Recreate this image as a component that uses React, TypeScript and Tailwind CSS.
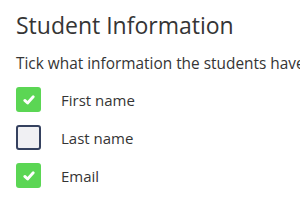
import React from "react";

const fields = [
  { label: "First name", checked: true },
  { label: "Last name", checked: false },
  { label: "Email", checked: true },
];

function Check({ checked }: { checked: boolean }) {
  if (checked) {
    return (
      <div className="flex h-[25px] w-[25px] shrink-0 items-center justify-center rounded-[3px] bg-[#5bd654]">
        <svg width="12" height="10" viewBox="0 0 12 10" fill="none" className="mt-[1px]">
          <path d="M1.8 5.4 L4.6 8 L10.2 1.8" stroke="white" strokeWidth="2.8" strokeLinecap="round" strokeLinejoin="round" />
        </svg>
      </div>
    );
  }
  return <div className="h-[25px] w-[25px] shrink-0 rounded-[3px] border-2 border-[#35415f] bg-[#f0f0f3]" />;
}

export default function App() {
  return (
    <div className="h-[201px] w-[300px] overflow-hidden bg-white pl-[16px] pt-[10px] text-[#353535]" style={{ fontFamily: '"Open Sans", sans-serif' }}>
      <h1 className="text-[23px] leading-[30px] whitespace-nowrap">Student Information</h1>
      <p className="mt-[14px] text-[15.4px] leading-[20px] whitespace-nowrap">Tick what information the students have</p>
      <ul className="mt-[13px] flex flex-col gap-[13px]">
        {fields.map((f) => (
          <li key={f.label} className="flex items-center gap-[20px]">
            <Check checked={f.checked} />
            <span className="text-[15px] leading-[20px]">{f.label}</span>
          </li>
        ))}
      </ul>
    </div>
  );
}
